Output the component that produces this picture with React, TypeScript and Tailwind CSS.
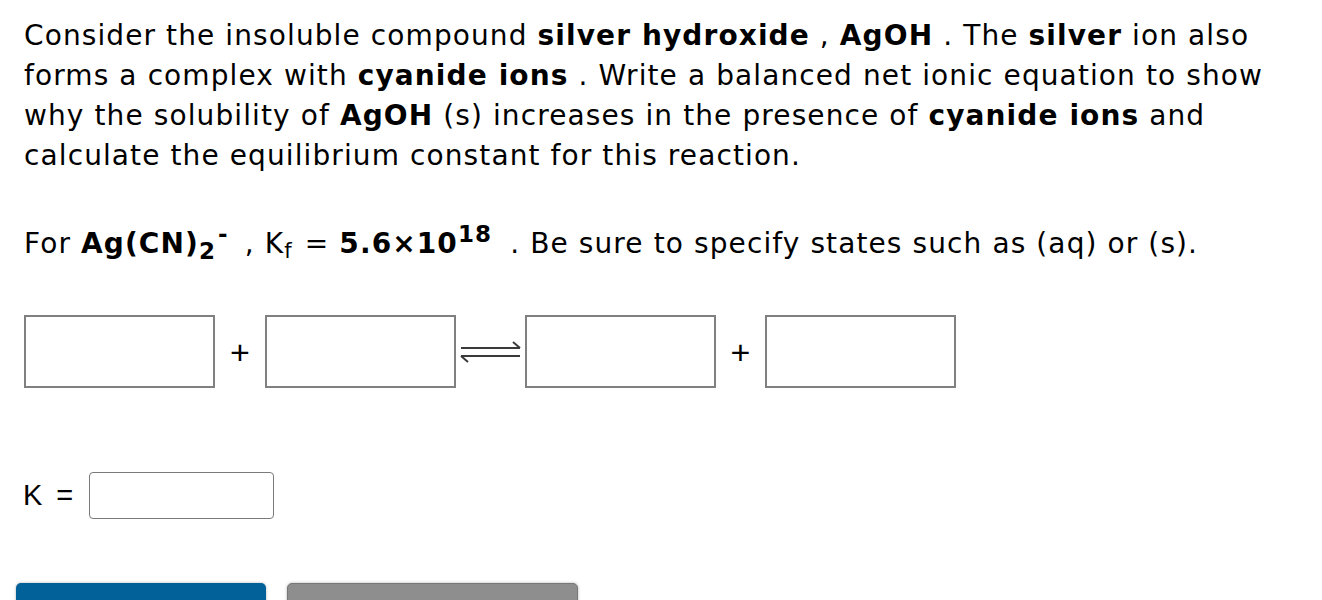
import React from "react";

const body = { fontFamily: '"DejaVu Sans", Verdana, sans-serif' };
const plain = { fontFamily: '"Liberation Sans", Arial, sans-serif' };

function AnswerBox() {
    return <div className="w-[191px] h-[73px] border-2 border-[#808080] bg-white shrink-0"/>;
}

function Plus({width}: { width: string }) {
    return (
        <div className={`${width} flex justify-center items-center text-[34px] leading-none text-black`} style={plain}>
            +
        </div>
    );
}

// double harpoon arrow used between reactants and products
function EquilibriumArrow() {
    return (
        <div className="w-[69px] flex justify-center items-center">
            <svg width="62" height="24" viewBox="0 0 62 24">
                <line x1="1" y1="8" x2="60" y2="8" stroke="#3a3a3a" strokeWidth="2.2"/>
                <line x1="60" y1="8" x2="53" y2="2" stroke="#3a3a3a" strokeWidth="2"/>
                <line x1="1" y1="16" x2="60" y2="16" stroke="#3a3a3a" strokeWidth="2.2"/>
                <line x1="1" y1="16" x2="8" y2="22" stroke="#3a3a3a" strokeWidth="2"/>
            </svg>
        </div>
    );
}

export default function App() {
    return (
        <div className="bg-white min-h-screen w-[1322px] h-[600px] overflow-hidden text-black">
            <div className="pl-6 pr-[40px] pt-4 text-[28px] leading-[40px] tracking-[1.1px]" style={body}>
                <p>
                    Consider the insoluble compound <b>silver hydroxide</b> , <b>AgOH</b> . The <b>silver</b> ion also
                    forms a complex with <b>cyanide ions</b> . Write a balanced net ionic equation to show why the
                    solubility of <b>AgOH</b> (s) increases in the presence of <b>cyanide ions</b> and calculate the
                    equilibrium constant for this reaction.
                </p>
                <p className="mt-12">
                    For <b>Ag(CN)<sub className="text-[23px] leading-none">2</sub><sup
                    className="text-[23px] leading-none ml-[2px]">-</sup></b>{" "}
                    <span className="ml-[6px]">,</span> K<sub className="text-[21px] leading-none">f</sub>{" "}
                    <span className="ml-[2px]">=</span>{" "}
                    <b>5.6×10<sup className="text-[23px] leading-none">18</sup></b>{" "}
                    <span className="ml-[8px]">.</span> Be sure to specify states such as (aq) or (s).
                </p>
            </div>

            <div className="flex items-center pl-6 mt-[51px]">
                <AnswerBox/>
                <Plus width="w-[50px]"/>
                <AnswerBox/>
                <EquilibriumArrow/>
                <AnswerBox/>
                <Plus width="w-[49px]"/>
                <AnswerBox/>
            </div>

            <div className="flex items-center pl-[23px] mt-[84px]" style={plain}>
                <span className="text-[29px] leading-none">K</span>
                <span className="text-[29px] leading-none ml-[14px]">=</span>
                <div className="ml-4 w-[185px] h-[47px] border-[1.5px] border-[#7a7a7a] rounded-[4px] bg-white"/>
            </div>

            <div className="flex pl-4 mt-[64px] gap-[21px]">
                <button className="w-[250px] h-[48px] bg-[#03619a] rounded-[5px] shadow-[0_0_3px_rgba(0,0,0,0.3)]"/>
                <button
                    className="w-[291px] h-[48px] bg-[#8e8e8e] border border-[#787878] rounded-[5px] shadow-[0_0_3px_rgba(0,0,0,0.3)]"/>
            </div>
        </div>
    );
}
